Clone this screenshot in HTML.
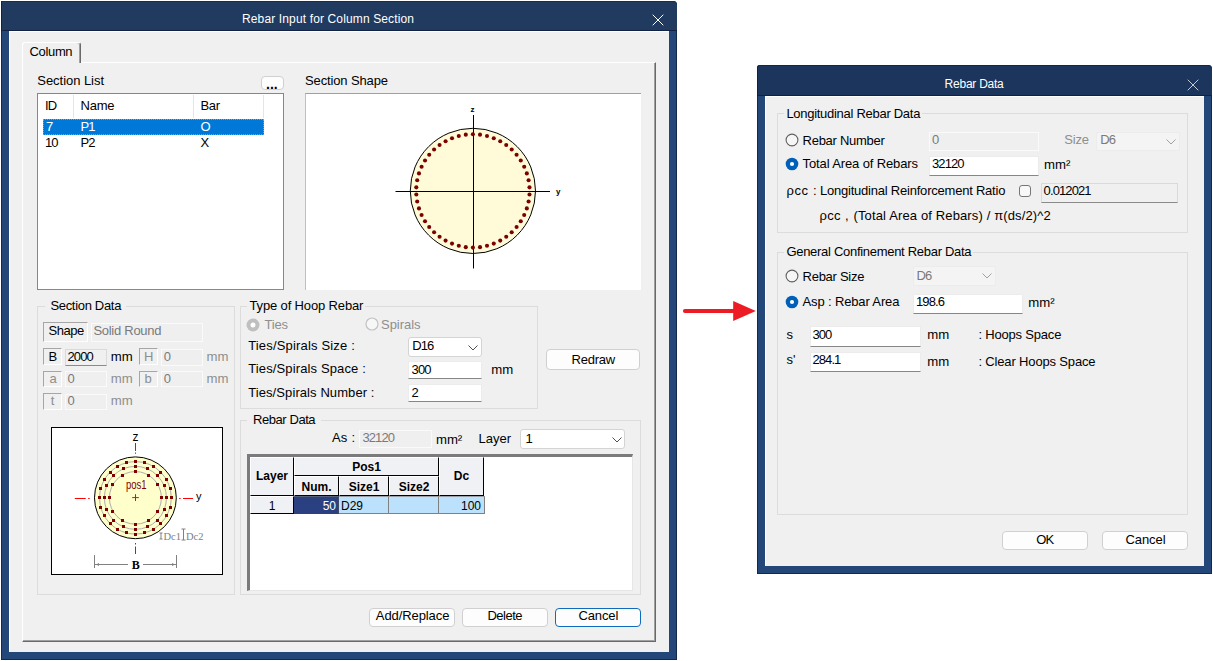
<!DOCTYPE html>
<html lang="en">
<head>
<meta charset="utf-8">
<title>Rebar Input for Column Section</title>
<style>
html,body{margin:0;padding:0;background:#fff;}
body{width:1213px;height:661px;overflow:hidden;font-family:"Liberation Sans","NanumGothic",sans-serif;font-size:13px;color:#000;}
#root{position:relative;width:1213px;height:661px;overflow:hidden;background:#fff;}
.a{position:absolute;box-sizing:border-box;}
.t{position:absolute;white-space:pre;line-height:16px;height:16px;}
.dlg{background:#24477a;}
.ttl{background:#203a60;}
.face{background:#f0f0f0;}
.grp{border:1px solid #dcdcdc;}
.gl{background:#f0f0f0;height:3px;}
.ed{background:#fff;border:1px solid #ececec;border-bottom:1px solid #868686;}
.edd{background:#efefef;border:1px solid #fafafa;}
.edr{background:#f0f0f0;border:1px solid #dadada;border-bottom:1px solid #8a8a8a;}
.cb{background:#fff;border:1px solid #d4d4d4;border-radius:3px;}
.cbd{background:#f4f4f4;border:1px solid #ececec;border-radius:2px;}
.btn{background:#fdfdfd;border:1px solid #d0d0d0;border-radius:4px;}
.btnf{background:#fdfdfd;border:1.5px solid #0f6cbd;border-radius:4px;}
.sunk{border:1px solid;border-color:#a6a6a6 #fff #fff #a6a6a6;}
.sunkd{border:1px solid;border-color:#c8c8c8 #fff #fff #c8c8c8;}
.hc{background:#f0f1f5;border:1px solid;border-color:#fff #000 #000 #fff;font-weight:bold;font-size:12px;text-align:center;}
.dc{font-size:12px;line-height:18px;}
svg{position:absolute;overflow:visible;}
</style>
</head>
<body>
<div id="root">
<div class="a dlg" style="left:1px;top:1px;width:676px;height:659px;border-top-right-radius:4px;border-left:1px solid #13284a;border-right:1px solid #13284a;border-bottom:1px solid #13284a;"></div><div class="a ttl" style="left:1px;top:1px;width:676px;height:30px;border-top-right-radius:4px;border-left:1px solid #0f2243;border-bottom:1px solid #0f2243;border-top:1px solid #162d52;"></div><div class="a face" style="left:9px;top:31px;width:660px;height:621px;border-top:1px solid #fff;border-left:1px solid #fff;"></div><svg style="left:651.5px;top:13.5px" width="12" height="12" viewBox="0 0 12 12"><path d="M0.7 0.7 L11.3 11.3 M11.3 0.7 L0.7 11.3" stroke="#fff" stroke-width="1" fill="none"/></svg><div class="a a" style="left:22px;top:62px;width:634px;height:580px;border:1px solid;border-color:#fff #696969 #696969 #fff;box-shadow:inset -1px -1px 0 #a0a0a0;"></div><div class="a a" style="left:22px;top:42px;width:59px;height:21px;background:#f0f0f0;border:1px solid;border-color:#fff #696969 transparent #fff;border-bottom:none;border-top-left-radius:3px;border-top-right-radius:3px;box-shadow:inset -1px 0 0 #a0a0a0;"></div><div class="a a" style="left:37px;top:93px;width:247px;height:197px;background:#fff;border:1px solid #828790;"></div><div class="a a" style="left:73px;top:95px;width:1px;height:23px;background:#e5e5e5;"></div><div class="a a" style="left:193px;top:95px;width:1px;height:23px;background:#e5e5e5;"></div><div class="a a" style="left:263px;top:95px;width:1px;height:23px;background:#e5e5e5;"></div><div class="a a" style="left:42.5px;top:119px;width:221.5px;height:16px;background:#0078d7;outline:1px dotted #d9874a;outline-offset:-1px;"></div><div class="a btn" style="left:261px;top:76px;width:23px;height:14px;border-radius:4px;"></div><div class="a a" style="left:305px;top:93px;width:336px;height:197px;background:#fff;border-top:1px solid #a0a0a0;border-left:1px solid #c0c0c0;"></div><svg style="left:0;top:0" width="1213" height="661"><circle cx="472.9" cy="190.9" r="62.6" fill="#fffbd9" stroke="#000" stroke-width="1"/><path d="M395.5 191.5 H550 M473.5 115 V268.5" stroke="#000" stroke-width="1" fill="none"/><circle cx="529.49" cy="187.34" r="2.05" fill="#7b0000"/><circle cx="528.60" cy="180.28" r="2.05" fill="#7b0000"/><circle cx="526.82" cy="173.38" r="2.05" fill="#7b0000"/><circle cx="524.20" cy="166.76" r="2.05" fill="#7b0000"/><circle cx="520.77" cy="160.52" r="2.05" fill="#7b0000"/><circle cx="516.59" cy="154.76" r="2.05" fill="#7b0000"/><circle cx="511.71" cy="149.57" r="2.05" fill="#7b0000"/><circle cx="506.23" cy="145.03" r="2.05" fill="#7b0000"/><circle cx="500.22" cy="141.21" r="2.05" fill="#7b0000"/><circle cx="493.77" cy="138.18" r="2.05" fill="#7b0000"/><circle cx="487.00" cy="135.98" r="2.05" fill="#7b0000"/><circle cx="480.01" cy="134.65" r="2.05" fill="#7b0000"/><circle cx="472.90" cy="134.20" r="2.05" fill="#7b0000"/><circle cx="465.79" cy="134.65" r="2.05" fill="#7b0000"/><circle cx="458.80" cy="135.98" r="2.05" fill="#7b0000"/><circle cx="452.03" cy="138.18" r="2.05" fill="#7b0000"/><circle cx="445.58" cy="141.21" r="2.05" fill="#7b0000"/><circle cx="439.57" cy="145.03" r="2.05" fill="#7b0000"/><circle cx="434.09" cy="149.57" r="2.05" fill="#7b0000"/><circle cx="429.21" cy="154.76" r="2.05" fill="#7b0000"/><circle cx="425.03" cy="160.52" r="2.05" fill="#7b0000"/><circle cx="421.60" cy="166.76" r="2.05" fill="#7b0000"/><circle cx="418.98" cy="173.38" r="2.05" fill="#7b0000"/><circle cx="417.20" cy="180.28" r="2.05" fill="#7b0000"/><circle cx="416.31" cy="187.34" r="2.05" fill="#7b0000"/><circle cx="416.31" cy="194.46" r="2.05" fill="#7b0000"/><circle cx="417.20" cy="201.52" r="2.05" fill="#7b0000"/><circle cx="418.98" cy="208.42" r="2.05" fill="#7b0000"/><circle cx="421.60" cy="215.04" r="2.05" fill="#7b0000"/><circle cx="425.03" cy="221.28" r="2.05" fill="#7b0000"/><circle cx="429.21" cy="227.04" r="2.05" fill="#7b0000"/><circle cx="434.09" cy="232.23" r="2.05" fill="#7b0000"/><circle cx="439.57" cy="236.77" r="2.05" fill="#7b0000"/><circle cx="445.58" cy="240.59" r="2.05" fill="#7b0000"/><circle cx="452.03" cy="243.62" r="2.05" fill="#7b0000"/><circle cx="458.80" cy="245.82" r="2.05" fill="#7b0000"/><circle cx="465.79" cy="247.15" r="2.05" fill="#7b0000"/><circle cx="472.90" cy="247.60" r="2.05" fill="#7b0000"/><circle cx="480.01" cy="247.15" r="2.05" fill="#7b0000"/><circle cx="487.00" cy="245.82" r="2.05" fill="#7b0000"/><circle cx="493.77" cy="243.62" r="2.05" fill="#7b0000"/><circle cx="500.22" cy="240.59" r="2.05" fill="#7b0000"/><circle cx="506.23" cy="236.77" r="2.05" fill="#7b0000"/><circle cx="511.71" cy="232.23" r="2.05" fill="#7b0000"/><circle cx="516.59" cy="227.04" r="2.05" fill="#7b0000"/><circle cx="520.77" cy="221.28" r="2.05" fill="#7b0000"/><circle cx="524.20" cy="215.04" r="2.05" fill="#7b0000"/><circle cx="526.82" cy="208.42" r="2.05" fill="#7b0000"/><circle cx="528.60" cy="201.52" r="2.05" fill="#7b0000"/><circle cx="529.49" cy="194.46" r="2.05" fill="#7b0000"/><text x="470.5" y="112" font-size="8" font-weight="bold" font-family="Liberation Sans,sans-serif">z</text><text x="556" y="194" font-size="8" font-weight="bold" font-family="Liberation Sans,sans-serif">y</text></svg><div class="a grp" style="left:37px;top:306px;width:198px;height:289px;"></div><div class="a gl" style="left:45px;top:305px;width:81px;height:3px;"></div><div class="a sunk" style="left:43px;top:322px;width:45px;height:20px;"></div><div class="a edd" style="left:91px;top:323px;width:112px;height:19px;"></div><div class="a sunk" style="left:43px;top:348px;width:19px;height:17px;"></div><div class="a edr" style="left:65px;top:349px;width:42px;height:17px;"></div><div class="a sunk" style="left:139px;top:348px;width:19px;height:17px;"></div><div class="a edd" style="left:161px;top:349px;width:42px;height:17px;"></div><div class="a sunk" style="left:43px;top:371px;width:19px;height:16px;"></div><div class="a edd" style="left:65px;top:371px;width:42px;height:16px;"></div><div class="a sunk" style="left:139px;top:371px;width:19px;height:16px;"></div><div class="a edd" style="left:161px;top:371px;width:42px;height:16px;"></div><div class="a sunk" style="left:43px;top:393px;width:19px;height:17px;"></div><div class="a edd" style="left:65px;top:394px;width:42px;height:16px;"></div><div class="a a" style="left:51px;top:427px;width:172px;height:148px;background:#fff;border:1px solid #000;"></div><svg style="left:0;top:0" width="1213" height="661"><circle cx="135.4" cy="497.8" r="40.9" fill="#ffffcc" stroke="#000" stroke-width="1"/><ellipse cx="135.4" cy="497.85" rx="35.9" ry="36.3" fill="none" stroke="#adadad" stroke-width="1"/><ellipse cx="135.4" cy="497.85" rx="31.05" ry="31.5" fill="none" stroke="#adadad" stroke-width="1"/><ellipse cx="135.4" cy="497.85" rx="26.0" ry="26.3" fill="none" stroke="#adadad" stroke-width="1"/><rect x="170" y="496" width="3" height="3" fill="#800000"/><rect x="169" y="487" width="3" height="3" fill="#800000"/><rect x="165" y="478" width="3" height="3" fill="#800000"/><rect x="159" y="471" width="3" height="3" fill="#800000"/><rect x="152" y="465" width="3" height="3" fill="#800000"/><rect x="143" y="461" width="3" height="3" fill="#800000"/><rect x="134" y="460" width="3" height="3" fill="#800000"/><rect x="125" y="461" width="3" height="3" fill="#800000"/><rect x="116" y="465" width="3" height="3" fill="#800000"/><rect x="109" y="471" width="3" height="3" fill="#800000"/><rect x="103" y="478" width="3" height="3" fill="#800000"/><rect x="99" y="487" width="3" height="3" fill="#800000"/><rect x="98" y="496" width="3" height="3" fill="#800000"/><rect x="99" y="506" width="3" height="3" fill="#800000"/><rect x="103" y="514" width="3" height="3" fill="#800000"/><rect x="109" y="522" width="3" height="3" fill="#800000"/><rect x="116" y="528" width="3" height="3" fill="#800000"/><rect x="125" y="531" width="3" height="3" fill="#800000"/><rect x="134" y="533" width="3" height="3" fill="#800000"/><rect x="143" y="531" width="3" height="3" fill="#800000"/><rect x="152" y="528" width="3" height="3" fill="#800000"/><rect x="159" y="522" width="3" height="3" fill="#800000"/><rect x="165" y="514" width="3" height="3" fill="#800000"/><rect x="169" y="506" width="3" height="3" fill="#800000"/><rect x="165" y="496" width="3" height="3" fill="#800000"/><rect x="163" y="484" width="3" height="3" fill="#800000"/><rect x="156" y="474" width="3" height="3" fill="#800000"/><rect x="146" y="467" width="3" height="3" fill="#800000"/><rect x="134" y="465" width="3" height="3" fill="#800000"/><rect x="122" y="467" width="3" height="3" fill="#800000"/><rect x="112" y="474" width="3" height="3" fill="#800000"/><rect x="105" y="484" width="3" height="3" fill="#800000"/><rect x="103" y="496" width="3" height="3" fill="#800000"/><rect x="105" y="508" width="3" height="3" fill="#800000"/><rect x="112" y="519" width="3" height="3" fill="#800000"/><rect x="122" y="525" width="3" height="3" fill="#800000"/><rect x="134" y="528" width="3" height="3" fill="#800000"/><rect x="146" y="525" width="3" height="3" fill="#800000"/><rect x="156" y="519" width="3" height="3" fill="#800000"/><rect x="163" y="508" width="3" height="3" fill="#800000"/><rect x="160" y="496" width="3" height="3" fill="#800000"/><rect x="156" y="483" width="3" height="3" fill="#800000"/><rect x="147" y="474" width="3" height="3" fill="#800000"/><rect x="134" y="470" width="3" height="3" fill="#800000"/><rect x="121" y="474" width="3" height="3" fill="#800000"/><rect x="111" y="483" width="3" height="3" fill="#800000"/><rect x="108" y="496" width="3" height="3" fill="#800000"/><rect x="111" y="510" width="3" height="3" fill="#800000"/><rect x="121" y="519" width="3" height="3" fill="#800000"/><rect x="134" y="523" width="3" height="3" fill="#800000"/><rect x="147" y="519" width="3" height="3" fill="#800000"/><rect x="156" y="510" width="3" height="3" fill="#800000"/><path d="M135.5 443 V451 M135.5 452.5 V453.8 M135.5 543 V544.5 M135.5 546.5 V554 M74.8 498.5 H85.7 M88.2 498.5 H89.7 M179.1 498.5 H180.6 M183 498.5 H193" stroke="#ff0000" stroke-width="1" fill="none"/><path d="M132.2 497.6 H138.8 M135.5 494.2 V501" stroke="#ff0000" stroke-width="1" fill="none"/><text x="125.9" y="489.2" font-size="12.5" fill="#800000" textLength="20.6" lengthAdjust="spacingAndGlyphs" font-family="Liberation Sans,sans-serif">pos1</text><text x="135.4" y="441" font-size="12" text-anchor="middle" font-family="Liberation Sans,sans-serif">z</text><text x="196" y="500.3" font-size="11" font-family="Liberation Sans,sans-serif">y</text><path d="M94.5 555 V568 M176.5 555 V568 M94.5 564.5 H128 M143 564.5 H176.5" stroke="#808080" stroke-width="1" fill="none"/><path d="M96 564.5 l3 -1.5 v3 z M175 564.5 l-3 -1.5 v3 z" fill="#808080"/><text x="135.70000000000002" y="569" font-size="12" font-weight="bold" text-anchor="middle" font-family="Liberation Serif,serif">B</text><text x="163.5" y="539.5" font-size="10.5" fill="#808080" font-family="Liberation Serif,serif">Dc1</text><text x="186" y="539.5" font-size="10.5" fill="#808080" font-family="Liberation Serif,serif">Dc2</text><path d="M161 533 V539 M159.5 533 H162.5 M159.5 539 H162.5 M183.5 529 V540 M181.5 529 H185.5 M181.5 540 H185.5" stroke="#808080" stroke-width="1" fill="none"/></svg><div class="a grp" style="left:240px;top:306px;width:298px;height:103px;"></div><div class="a gl" style="left:247px;top:305px;width:118px;height:3px;"></div><svg style="left:246.4px;top:317.5px" width="14" height="14" viewBox="0 0 14 14"><circle cx="7" cy="7" r="6.5" fill="#bfbfbf"/><circle cx="7" cy="7" r="2.5" fill="#fff"/></svg><svg style="left:364.5px;top:317.4px" width="14" height="14" viewBox="0 0 14 14"><circle cx="7" cy="7" r="6.0" fill="#f7f7f7" stroke="#c2c2c2" stroke-width="1.2"/></svg><div class="a cb" style="left:408px;top:337px;width:74px;height:20px;"></div><svg style="left:468px;top:345px" width="10" height="6" viewBox="0 0 10 6"><path d="M0.5 0.5 L5 5 L9.5 0.5" fill="none" stroke="#505050" stroke-width="1"/></svg><div class="a ed" style="left:408px;top:361px;width:74px;height:18px;"></div><div class="a ed" style="left:408px;top:384px;width:74px;height:18px;"></div><div class="a btn" style="left:546px;top:349px;width:94px;height:21px;"></div><div class="a grp" style="left:240px;top:420px;width:401px;height:175px;"></div><div class="a gl" style="left:247px;top:419px;width:74px;height:3px;"></div><div class="a edd" style="left:359px;top:430px;width:73px;height:18px;"></div><div class="a cb" style="left:520px;top:429px;width:105px;height:20px;"></div><svg style="left:611.5px;top:437px" width="10" height="6" viewBox="0 0 10 6"><path d="M0.5 0.5 L5 5 L9.5 0.5" fill="none" stroke="#505050" stroke-width="1"/></svg><div class="a a" style="left:247px;top:454px;width:386px;height:137px;background:#fff;border-style:solid;border-width:3px 1px 1px 3px;border-color:#7b7b7b #e6e6e6 #e6e6e6 #7b7b7b;"></div><div class="a hc" style="left:250px;top:457px;width:44px;height:39px;line-height:37px;">Layer</div><div class="a hc" style="left:294px;top:457px;width:145px;height:19px;line-height:18px;">Pos1</div><div class="a hc" style="left:294px;top:476px;width:45px;height:20px;line-height:20px;">Num.</div><div class="a hc" style="left:339px;top:476px;width:50px;height:20px;line-height:20px;">Size1</div><div class="a hc" style="left:389px;top:476px;width:50px;height:20px;line-height:20px;">Size2</div><div class="a hc" style="left:439px;top:457px;width:45px;height:39px;line-height:37px;">Dc</div><div class="a hc" style="left:250px;top:496px;width:44px;height:18px;line-height:18px;font-weight:normal;">1</div><div class="a dc" style="left:294px;top:496px;width:45px;height:18px;background:#2b4080;color:#fff;text-align:right;padding-right:2px;border-top:1px solid #55607a;border-right:1px solid #404a66;">50</div><div class="a dc" style="left:339px;top:496px;width:50px;height:18px;background:#bbe1fc;padding-left:2px;border-top:1px solid #9aa0a8;border-right:1px solid #808080;border-bottom:1px solid #808080;">D29</div><div class="a dc" style="left:389px;top:496px;width:50px;height:18px;background:#bbe1fc;border-top:1px solid #9aa0a8;border-right:1px solid #808080;border-bottom:1px solid #808080;"></div><div class="a dc" style="left:439px;top:496px;width:46px;height:18px;background:#bbe1fc;text-align:right;padding-right:3px;border-top:1px solid #9aa0a8;border-right:1px solid #808080;border-bottom:1px solid #808080;">100</div><div class="a btn" style="left:369px;top:608px;width:86px;height:19px;"></div><div class="a btn" style="left:462px;top:608px;width:86px;height:19px;"></div><div class="a btnf" style="left:555px;top:608px;width:86px;height:19px;"></div><svg style="left:0;top:0" width="1213" height="661"><path d="M685 311 H736" stroke="#ed1c24" stroke-width="4.2" stroke-linecap="round" fill="none"/><path d="M733.2 301 L755.8 311 L733.2 321 Z" fill="#ed1c24"/></svg><div class="a dlg" style="left:757px;top:65px;width:455px;height:509px;border-top-left-radius:3px;border-top-right-radius:4px;border-left:1px solid #13284a;border-right:1px solid #13284a;border-bottom:1px solid #13284a;"></div><div class="a ttl" style="left:757px;top:65px;width:455px;height:31px;background:#1c355c;border-top-left-radius:3px;border-top-right-radius:4px;border-left:1px solid #0f2243;border-bottom:1px solid #0f2243;border-top:1px solid #11274a;"></div><div class="a face" style="left:765px;top:96px;width:439px;height:470px;border-top:1px solid #fff;border-left:1px solid #fff;"></div><svg style="left:1186.5px;top:78.5px" width="12" height="12" viewBox="0 0 12 12"><path d="M0.7 0.7 L11.3 11.3 M11.3 0.7 L0.7 11.3" stroke="#c3cad6" stroke-width="1" fill="none"/></svg><div class="a grp" style="left:777px;top:113px;width:411px;height:120px;"></div><div class="a gl" style="left:784px;top:112px;width:138px;height:3px;"></div><svg style="left:785px;top:132.8px" width="14" height="14" viewBox="0 0 14 14"><circle cx="7" cy="7" r="5.9" fill="#f6f6f6" stroke="#606060" stroke-width="1.1"/></svg><svg style="left:785px;top:157.2px" width="14" height="14" viewBox="0 0 14 14"><circle cx="7" cy="7" r="6.3" fill="#005fb8"/><circle cx="7" cy="7" r="2.1" fill="#fff"/></svg><div class="a edd" style="left:929px;top:132px;width:110px;height:19px;"></div><div class="a cbd" style="left:1096px;top:132px;width:84px;height:19px;"></div><svg style="left:1166px;top:139px" width="10" height="6" viewBox="0 0 10 6"><path d="M0.5 0.5 L5 5 L9.5 0.5" fill="none" stroke="#a0a0a0" stroke-width="1"/></svg><div class="a ed" style="left:929px;top:156px;width:110px;height:20px;"></div><div class="a a" style="left:1019px;top:185px;width:12px;height:12px;background:#f8f8f8;border:1px solid #767676;border-radius:3px;"></div><div class="a edr" style="left:1041px;top:183px;width:137px;height:20px;"></div><div class="a grp" style="left:777px;top:252px;width:411px;height:263px;"></div><div class="a gl" style="left:784px;top:251px;width:189px;height:3px;"></div><svg style="left:785px;top:269.4px" width="14" height="14" viewBox="0 0 14 14"><circle cx="7" cy="7" r="5.9" fill="#f6f6f6" stroke="#606060" stroke-width="1.1"/></svg><svg style="left:785px;top:295.2px" width="14" height="14" viewBox="0 0 14 14"><circle cx="7" cy="7" r="6.3" fill="#005fb8"/><circle cx="7" cy="7" r="2.1" fill="#fff"/></svg><div class="a cbd" style="left:912.5px;top:266px;width:83.5px;height:19.5px;"></div><svg style="left:982px;top:273px" width="10" height="6" viewBox="0 0 10 6"><path d="M0.5 0.5 L5 5 L9.5 0.5" fill="none" stroke="#a0a0a0" stroke-width="1"/></svg><div class="a ed" style="left:913px;top:294px;width:110px;height:20px;"></div><div class="a ed" style="left:809.5px;top:326px;width:111.0px;height:21px;"></div><div class="a ed" style="left:809.5px;top:352px;width:111.0px;height:20px;"></div><div class="a btn" style="left:1002px;top:531px;width:86px;height:19px;"></div><div class="a btn" style="left:1102px;top:531px;width:86px;height:19px;"></div><span class="t" id="t0" style="left:242.0px;top:11px;font-size:12px;color:#fff;letter-spacing:0.135px;">Rebar Input for Column Section</span>
<span class="t" id="t1" style="left:29.6px;top:44px;letter-spacing:-0.359px;">Column</span>
<span class="t" id="t2" style="left:37.3px;top:73px;letter-spacing:-0.046px;">Section List</span>
<span class="t" id="t3" style="left:305.0px;top:73px;letter-spacing:-0.132px;">Section Shape</span>
<span class="t" id="t4" style="left:266.0px;top:76px;font-size:14px;font-weight:bold;">...</span>
<span class="t" id="t5" style="left:45.0px;top:98px;letter-spacing:-0.900px;">ID</span>
<span class="t" id="t6" style="left:80.5px;top:98px;letter-spacing:-0.229px;">Name</span>
<span class="t" id="t7" style="left:200.5px;top:98px;letter-spacing:-0.367px;">Bar</span>
<span class="t" id="t8" style="left:46.0px;top:119px;color:#fff;">7</span>
<span class="t" id="t9" style="left:80.5px;top:119px;color:#fff;letter-spacing:-0.900px;">P1</span>
<span class="t" id="t10" style="left:200.5px;top:119px;color:#fff;">O</span>
<span class="t" id="t11" style="left:45.0px;top:135px;letter-spacing:-0.900px;">10</span>
<span class="t" id="t12" style="left:80.5px;top:135px;letter-spacing:-0.900px;">P2</span>
<span class="t" id="t13" style="left:200.5px;top:135px;">X</span>
<span class="t" id="t14" style="left:50.4px;top:298px;letter-spacing:-0.312px;">Section Data</span>
<span class="t" id="t15" style="left:48.4px;top:323px;letter-spacing:-0.423px;">Shape</span>
<span class="t" id="t16" style="left:93.4px;top:323px;color:#7a7a7a;letter-spacing:-0.273px;">Solid Round</span>
<span class="t" id="t17" style="left:48.4px;top:349px;">B</span>
<span class="t" id="t18" style="left:67.5px;top:349px;letter-spacing:-0.900px;">2000</span>
<span class="t" id="t19" style="left:110.7px;top:349px;font-size:13.2px;">mm</span>
<span class="t" id="t20" style="left:144.0px;top:349px;color:#8e8e8e;">H</span>
<span class="t" id="t21" style="left:163.7px;top:349px;color:#7a7a7a;">0</span>
<span class="t" id="t22" style="left:206.4px;top:349px;font-size:13.2px;color:#8e8e8e;">mm</span>
<span class="t" id="t23" style="left:49.5px;top:371px;color:#8e8e8e;">a</span>
<span class="t" id="t24" style="left:67.5px;top:371px;color:#7a7a7a;">0</span>
<span class="t" id="t25" style="left:110.7px;top:371px;font-size:13.2px;color:#8e8e8e;">mm</span>
<span class="t" id="t26" style="left:144.5px;top:371px;color:#8e8e8e;">b</span>
<span class="t" id="t27" style="left:163.7px;top:371px;color:#7a7a7a;">0</span>
<span class="t" id="t28" style="left:206.4px;top:371px;font-size:13.2px;color:#8e8e8e;">mm</span>
<span class="t" id="t29" style="left:50.8px;top:393px;color:#8e8e8e;">t</span>
<span class="t" id="t30" style="left:67.5px;top:393px;color:#7a7a7a;">0</span>
<span class="t" id="t31" style="left:110.7px;top:393px;font-size:13.2px;color:#8e8e8e;">mm</span>
<span class="t" id="t32" style="left:249.5px;top:298px;letter-spacing:-0.145px;">Type of Hoop Rebar</span>
<span class="t" id="t33" style="left:264.4px;top:317px;color:#8e8e8e;letter-spacing:-0.159px;">Ties</span>
<span class="t" id="t34" style="left:381.0px;top:317px;color:#8e8e8e;letter-spacing:-0.042px;">Spirals</span>
<span class="t" id="t35" style="left:248.2px;top:338px;letter-spacing:0.169px;">Ties/Spirals Size :</span>
<span class="t" id="t36" style="left:412.3px;top:338px;letter-spacing:-0.900px;">D16</span>
<span class="t" id="t37" style="left:248.2px;top:361px;letter-spacing:0.130px;">Ties/Spirals Space :</span>
<span class="t" id="t38" style="left:411.6px;top:362px;letter-spacing:-0.900px;">300</span>
<span class="t" id="t39" style="left:491.3px;top:362px;font-size:13.2px;">mm</span>
<span class="t" id="t40" style="left:248.2px;top:385px;letter-spacing:0.090px;">Ties/Spirals Number :</span>
<span class="t" id="t41" style="left:411.6px;top:385px;">2</span>
<span class="t" id="t42" style="left:571.6px;top:352px;letter-spacing:-0.239px;">Redraw</span>
<span class="t" id="t43" style="left:253.0px;top:412px;letter-spacing:-0.432px;">Rebar Data</span>
<span class="t" id="t44" style="left:332.0px;top:430px;letter-spacing:0.198px;">As :</span>
<span class="t" id="t45" style="left:362.4px;top:430px;color:#7a7a7a;letter-spacing:-0.900px;">32120</span>
<span class="t" id="t46" style="left:435.9px;top:432px;font-size:13.2px;">mm²</span>
<span class="t" id="t47" style="left:478.4px;top:431px;letter-spacing:0.017px;">Layer</span>
<span class="t" id="t48" style="left:525.4px;top:431px;">1</span>
<span class="t" id="t49" style="left:375.8px;top:608px;letter-spacing:-0.085px;">Add/Replace</span>
<span class="t" id="t50" style="left:487.4px;top:608px;letter-spacing:-0.496px;">Delete</span>
<span class="t" id="t51" style="left:578.5px;top:608px;letter-spacing:-0.134px;">Cancel</span>
<span class="t" id="t52" style="left:944.6px;top:76px;font-size:12px;color:#fff;letter-spacing:-0.242px;">Rebar Data</span>
<span class="t" id="t53" style="left:786.4px;top:106px;letter-spacing:-0.283px;">Longitudinal Rebar Data</span>
<span class="t" id="t54" style="left:802.6px;top:133px;letter-spacing:-0.279px;">Rebar Number</span>
<span class="t" id="t55" style="left:932.0px;top:132px;color:#7a7a7a;">0</span>
<span class="t" id="t56" style="left:1064.3px;top:132px;color:#8e8e8e;letter-spacing:-0.199px;">Size</span>
<span class="t" id="t57" style="left:1100.2px;top:132px;color:#7a7a7a;letter-spacing:-0.900px;">D6</span>
<span class="t" id="t58" style="left:802.6px;top:156px;letter-spacing:-0.126px;">Total Area of Rebars</span>
<span class="t" id="t59" style="left:932.0px;top:156px;letter-spacing:-0.900px;">32120</span>
<span class="t" id="t60" style="left:1044.0px;top:157px;font-size:13.2px;">mm²</span>
<span class="t" id="t61" style="left:786.4px;top:183px;letter-spacing:0.644px;">ρcc :</span>
<span class="t" id="t62" style="left:820.0px;top:183px;letter-spacing:-0.220px;">Longitudinal Reinforcement Ratio</span>
<span class="t" id="t63" style="left:1043.6px;top:183px;letter-spacing:-0.900px;">0.012021</span>
<span class="t" id="t64" style="left:819.4px;top:208px;letter-spacing:0.394px;">ρcc ,</span>
<span class="t" id="t65" style="left:853.5px;top:208px;letter-spacing:0.136px;">(Total Area of Rebars) / π(ds/2)^2</span>
<span class="t" id="t66" style="left:786.4px;top:244px;letter-spacing:-0.292px;">General Confinement Rebar Data</span>
<span class="t" id="t67" style="left:802.6px;top:269px;letter-spacing:-0.279px;">Rebar Size</span>
<span class="t" id="t68" style="left:916.6px;top:268px;color:#7a7a7a;letter-spacing:-0.900px;">D6</span>
<span class="t" id="t69" style="left:802.6px;top:294px;letter-spacing:-0.147px;">Asp : Rebar Area</span>
<span class="t" id="t70" style="left:916.0px;top:294px;letter-spacing:-0.900px;">198.6</span>
<span class="t" id="t71" style="left:1028.3px;top:295px;font-size:13.2px;">mm²</span>
<span class="t" id="t72" style="left:786.4px;top:327px;">s</span>
<span class="t" id="t73" style="left:812.4px;top:327px;letter-spacing:-0.900px;">300</span>
<span class="t" id="t74" style="left:927.3px;top:327px;font-size:13.2px;">mm</span>
<span class="t" id="t75" style="left:978.4px;top:327px;letter-spacing:-0.190px;">: Hoops Space</span>
<span class="t" id="t76" style="left:786.4px;top:352px;">s'</span>
<span class="t" id="t77" style="left:812.4px;top:352px;letter-spacing:-0.900px;">284.1</span>
<span class="t" id="t78" style="left:927.3px;top:354px;font-size:13.2px;">mm</span>
<span class="t" id="t79" style="left:978.4px;top:354px;letter-spacing:-0.153px;">: Clear Hoops Space</span>
<span class="t" id="t80" style="left:1036.3px;top:532px;letter-spacing:-0.900px;">OK</span>
<span class="t" id="t81" style="left:1125.4px;top:532px;letter-spacing:-0.054px;">Cancel</span>
</div>
</body>
</html>
